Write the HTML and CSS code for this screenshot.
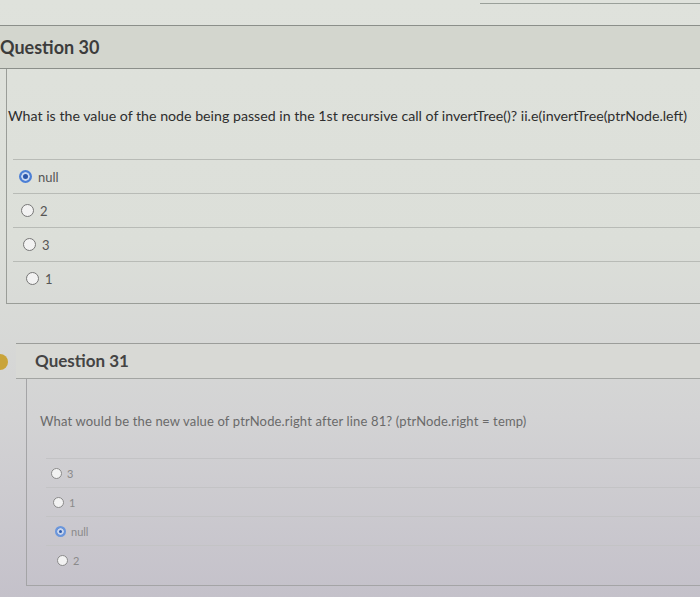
FILE: index.html
```html
<!DOCTYPE html>
<html>
<head>
<meta charset="utf-8">
<link rel="stylesheet" href="styles.css">
</head>
<body>
<div class="page">
  <div class="top-edge"></div>
  <section class="question q30">
    <div class="qhead">Question 30</div>
    <div class="qbody">
      <p class="qtext">What is the value of the node being passed in the 1st recursive call of invertTree()? ii.e(invertTree(ptrNode.left)</p>
      <ul class="answers">
        <li class="answer"><span class="radio checked"></span><span class="label">null</span></li>
        <li class="answer"><span class="radio"></span><span class="label">2</span></li>
        <li class="answer"><span class="radio"></span><span class="label">3</span></li>
        <li class="answer"><span class="radio"></span><span class="label">1</span></li>
      </ul>
    </div>
  </section>
  <section class="question q31">
    <span class="marker"></span>
    <div class="qhead">Question 31</div>
    <div class="qbody">
      <p class="qtext">What would be the new value of ptrNode.right after line 81? (ptrNode.right = temp)</p>
      <ul class="answers">
        <li class="answer"><span class="radio"></span><span class="label">3</span></li>
        <li class="answer"><span class="radio"></span><span class="label">1</span></li>
        <li class="answer"><span class="radio checked"></span><span class="label">null</span></li>
        <li class="answer"><span class="radio"></span><span class="label">2</span></li>
      </ul>
    </div>
  </section>
</div>
</body>
</html>
```
FILE: styles.css
```css
html, body {
  margin: 0;
  padding: 0;
}
body {
  width: 700px;
  height: 597px;
  overflow: hidden;
  font-family: Lato, "Open Sans", sans-serif;
  background: linear-gradient(180deg, #dfe2dc 0%, #dcdfd9 40%, #d3d3d4 70%, #c4c1ca 100%);
  color: #3a3a3a;
}
.page {
  position: relative;
  width: 700px;
  height: 597px;
}
.top-edge {
  height: 3px;
  margin-left: 480px;
  border-bottom: 1px solid #9aa09a;
}
.question {
  position: relative;
}
.q30 {
  margin-top: 21px;
}
.qhead {
  font-weight: 700;
  background: #d3d6ce;
  border-top: 1px solid #8b8f8a;
  border-bottom: 1px solid #8b8f8a;
}
.q30 .qhead {
  height: 42px;
  line-height: 42px;
  font-size: 18px;
  padding-left: 0;
  color: #3c3c3c;
}
.q30 .qbody {
  margin-left: 6px;
  border-left: 1px solid #9a9d98;
  border-bottom: 1px solid #9a9d98;
  padding-top: 38px;
  height: 196px;
}
.qtext {
  margin: 0;
}
.q30 .qtext {
  font-size: 14.2px;
  line-height: 18px;
  margin-left: 1px;
  letter-spacing: 0;
  color: #2e2e2e;
}
.answers {
  list-style: none;
  margin: 0;
  padding: 0;
}
.answer {
  display: flex;
  align-items: center;
  border-top: 1px solid #b8bbb6;
}
.q30 .answers {
  margin-top: 34px;
  margin-left: 6px;
}
.q30 .answer {
  height: 33px;
  padding-left: 6px;
  font-size: 13px;
  color: #555;
}
.q30 .answer:nth-child(2) { padding-left: 8px; }
.q30 .answer:nth-child(3) { padding-left: 10px; }
.q30 .answer:nth-child(4) { padding-left: 13px; }
.radio {
  box-sizing: border-box;
  width: 13px;
  height: 13px;
  border-radius: 50%;
  border: 1px solid #777;
  background: #f2f2f2;
  margin-right: 6px;
  flex: none;
}
.radio.checked {
  border: 2px solid #4b7fd6;
  background: #2b55a8;
  box-shadow: inset 0 0 0 2px #c9d8f2;
}
.q31 {
  margin-top: 39px;
  margin-left: 16px;
}
.marker {
  position: absolute;
  left: -24px;
  top: 11px;
  width: 16px;
  height: 16px;
  border-radius: 50%;
  background: #c9a43a;
}
.q31 .qhead {
  height: 34px;
  line-height: 34px;
  font-size: 17px;
  padding-left: 19px;
  color: #444;
  background: #d8d9d5;
  border-top-color: #9b9d9a;
  border-bottom-color: #a3a5a2;
}
.q31 .qbody {
  margin-left: 10px;
  border-left: 1px solid #a4a4a6;
  border-bottom: 1px solid #a4a4a6;
  padding-top: 34px;
  height: 172px;
}
.q31 .qtext {
  font-size: 13px;
  line-height: 16px;
  margin-left: 13px;
  color: #6a6a6a;
  letter-spacing: 0.15px;
}
.q31 .answers {
  margin-top: 29px;
  margin-left: 19px;
}
.q31 .answer {
  height: 28px;
  padding-left: 5px;
  font-size: 11px;
  color: #8a8a8a;
  border-top-color: #c3c3c5;
}
.q31 .answer:nth-child(2) { padding-left: 7px; }
.q31 .answer:nth-child(3) { padding-left: 9px; }
.q31 .answer:nth-child(4) { padding-left: 11px; }
.q31 .radio {
  width: 11px;
  height: 11px;
  margin-right: 5px;
  border-color: #8a8a8a;
}
.q31 .radio.checked {
  border-color: #6a96dc;
  background: #2f5cae;
  box-shadow: inset 0 0 0 2px #c9d6ee;
}
```
